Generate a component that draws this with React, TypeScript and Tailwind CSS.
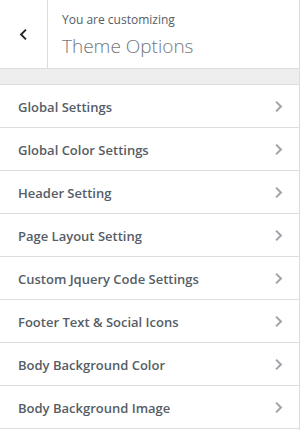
import React from 'react';

const sections = [
  'Global Settings',
  'Global Color Settings',
  'Header Setting',
  'Page Layout Setting',
  'Custom Jquery Code Settings',
  'Footer Text & Social Icons',
  'Body Background Color',
  'Body Background Image',
];

const Chevron: React.FC<{ className?: string }> = ({ className }) => (
  <svg viewBox="0 0 10 16" className={className} fill="none" stroke="currentColor" strokeWidth={2.6}>
    <path d="M2 2l6 6-6 6" />
  </svg>
);

export default function App() {
  return (
    <div className="w-[300px] h-[430px] overflow-hidden bg-white border-r border-[#dcdcde] font-['Open_Sans',sans-serif]">
      <div className="flex h-[69px] border-b border-[#dddddd]">
        <button className="w-[48px] flex items-center justify-center border-r border-[#dddddd] text-[#23282d]">
          <svg viewBox="0 0 10 16" className="w-[9px] h-[13px]" fill="none" stroke="currentColor" strokeWidth={2.4}>
            <path d="M8 2L2 8l6 6" />
          </svg>
        </button>
        <div className="flex flex-col pl-[14px] pt-[12px]">
          <span className="text-[12px] leading-[16px] text-[#555d66]">You are customizing</span>
          <span className="text-[19px] leading-[26px] mt-[5px] font-light text-[#72777c]">Theme Options</span>
        </div>
      </div>
      <div className="h-[16px] bg-[#eeeeee] border-b border-[#dddddd]" />
      <ul>
        {sections.map((s) => (
          <li
            key={s}
            className="h-[43px] flex items-center justify-between pl-[18px] pr-[16px] pt-[3px] border-b border-[#dddddd] text-[13px] font-semibold text-[#555d66]"
          >
            <span>{s}</span>
            <Chevron className="w-[9px] h-[13px] text-[#a0a5aa] -mt-[2px]" />
          </li>
        ))}
      </ul>
    </div>
  );
}
